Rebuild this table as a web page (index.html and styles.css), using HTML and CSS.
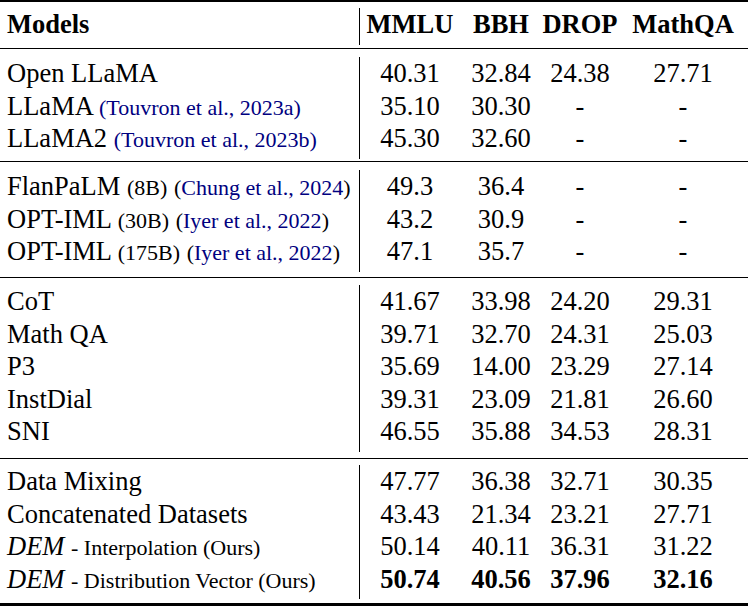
FILE: index.html
```html
<!DOCTYPE html>
<html lang="en">
<head>
<meta charset="utf-8">
<title>Results table</title>
<link rel="stylesheet" href="styles.css">
</head>
<body>
<div class="table">
  <div class="group head">
    <div class="row">
      <div class="name b">Models</div>
      <div class="num b">MMLU</div>
      <div class="num b">BBH</div>
      <div class="num b">DROP</div>
      <div class="num b">MathQA</div>
    </div>
  </div>
  <div class="group g1">
    <div class="row"><div class="name">Open LLaMA</div><div class="num">40.31</div><div class="num">32.84</div><div class="num">24.38</div><div class="num">27.71</div></div>
    <div class="row"><div class="name">LLaMA <span class="cite">(Touvron et al., 2023a)</span></div><div class="num">35.10</div><div class="num">30.30</div><div class="num">-</div><div class="num">-</div></div>
    <div class="row"><div class="name">LLaMA2 <span class="cite">(Touvron et al., 2023b)</span></div><div class="num">45.30</div><div class="num">32.60</div><div class="num">-</div><div class="num">-</div></div>
  </div>
  <div class="group g2">
    <div class="row"><div class="name">FlanPaLM <span class="small">(8B)</span> <span class="small">(<span class="cite">Chung et al., 2024</span>)</span></div><div class="num">49.3</div><div class="num">36.4</div><div class="num">-</div><div class="num">-</div></div>
    <div class="row"><div class="name">OPT-IML <span class="small">(30B)</span> <span class="small">(<span class="cite">Iyer et al., 2022</span>)</span></div><div class="num">43.2</div><div class="num">30.9</div><div class="num">-</div><div class="num">-</div></div>
    <div class="row"><div class="name">OPT-IML <span class="small">(175B)</span> <span class="small">(<span class="cite">Iyer et al., 2022</span>)</span></div><div class="num">47.1</div><div class="num">35.7</div><div class="num">-</div><div class="num">-</div></div>
  </div>
  <div class="group g3">
    <div class="row"><div class="name">CoT</div><div class="num">41.67</div><div class="num">33.98</div><div class="num">24.20</div><div class="num">29.31</div></div>
    <div class="row"><div class="name">Math QA</div><div class="num">39.71</div><div class="num">32.70</div><div class="num">24.31</div><div class="num">25.03</div></div>
    <div class="row"><div class="name">P3</div><div class="num">35.69</div><div class="num">14.00</div><div class="num">23.29</div><div class="num">27.14</div></div>
    <div class="row"><div class="name">InstDial</div><div class="num">39.31</div><div class="num">23.09</div><div class="num">21.81</div><div class="num">26.60</div></div>
    <div class="row"><div class="name">SNI</div><div class="num">46.55</div><div class="num">35.88</div><div class="num">34.53</div><div class="num">28.31</div></div>
  </div>
  <div class="group g4">
    <div class="row"><div class="name">Data Mixing</div><div class="num">47.77</div><div class="num">36.38</div><div class="num">32.71</div><div class="num">30.35</div></div>
    <div class="row"><div class="name">Concatenated Datasets</div><div class="num">43.43</div><div class="num">21.34</div><div class="num">23.21</div><div class="num">27.71</div></div>
    <div class="row"><div class="name"><i>DEM</i> <span class="small">- Interpolation (Ours)</span></div><div class="num">50.14</div><div class="num">40.11</div><div class="num">36.31</div><div class="num">31.22</div></div>
    <div class="row"><div class="name"><i>DEM</i> <span class="small">- Distribution Vector (Ours)</span></div><div class="num b">50.74</div><div class="num b">40.56</div><div class="num b">37.96</div><div class="num b">32.16</div></div>
  </div>
</div>
</body>
</html>
```

FILE: styles.css
```css
html, body {
  margin: 0;
  padding: 0;
  background: #ffffff;
}

body {
  font-family: "Liberation Serif", "Times New Roman", serif;
  font-size: 26.5px;
  color: #000000;
  width: 748px;
  height: 609px;
  overflow: hidden;
}

.table {
  width: 748px;
  border-top: 2px solid #000;
}

.group {
  display: grid;
  grid-template-columns: 360px 100px 82px 76px 130px;
  padding: 8px 0 3px;
  border-bottom: 1px solid #000;
}

.group.head { padding: 6px 0 3.5px; }
.group.g1 { padding: 8px 0 2.5px; }
.group.g2 { padding: 8px 0 5.5px; }
.group.g3 { padding: 7px 0 6.5px; }
.group.g4 {
  padding: 6px 0 4px;
  border-bottom: 3px solid #000;
}

.row {
  display: contents;
}

.row > div {
  height: 32.5px;
  line-height: 32.5px;
  white-space: nowrap;
}

.row:last-child > div {
  padding-bottom: 4px;
}

.name {
  box-sizing: content-box;
  padding-left: 7px;
  border-right: 1px solid #000;
}

.num {
  text-align: center;
}

.b {
  font-weight: bold;
}

.small,
.cite {
  font-size: 22px;
  line-height: 1;
}

.cite {
  color: #000080;
}

.small .cite {
  font-size: inherit;
}
```
